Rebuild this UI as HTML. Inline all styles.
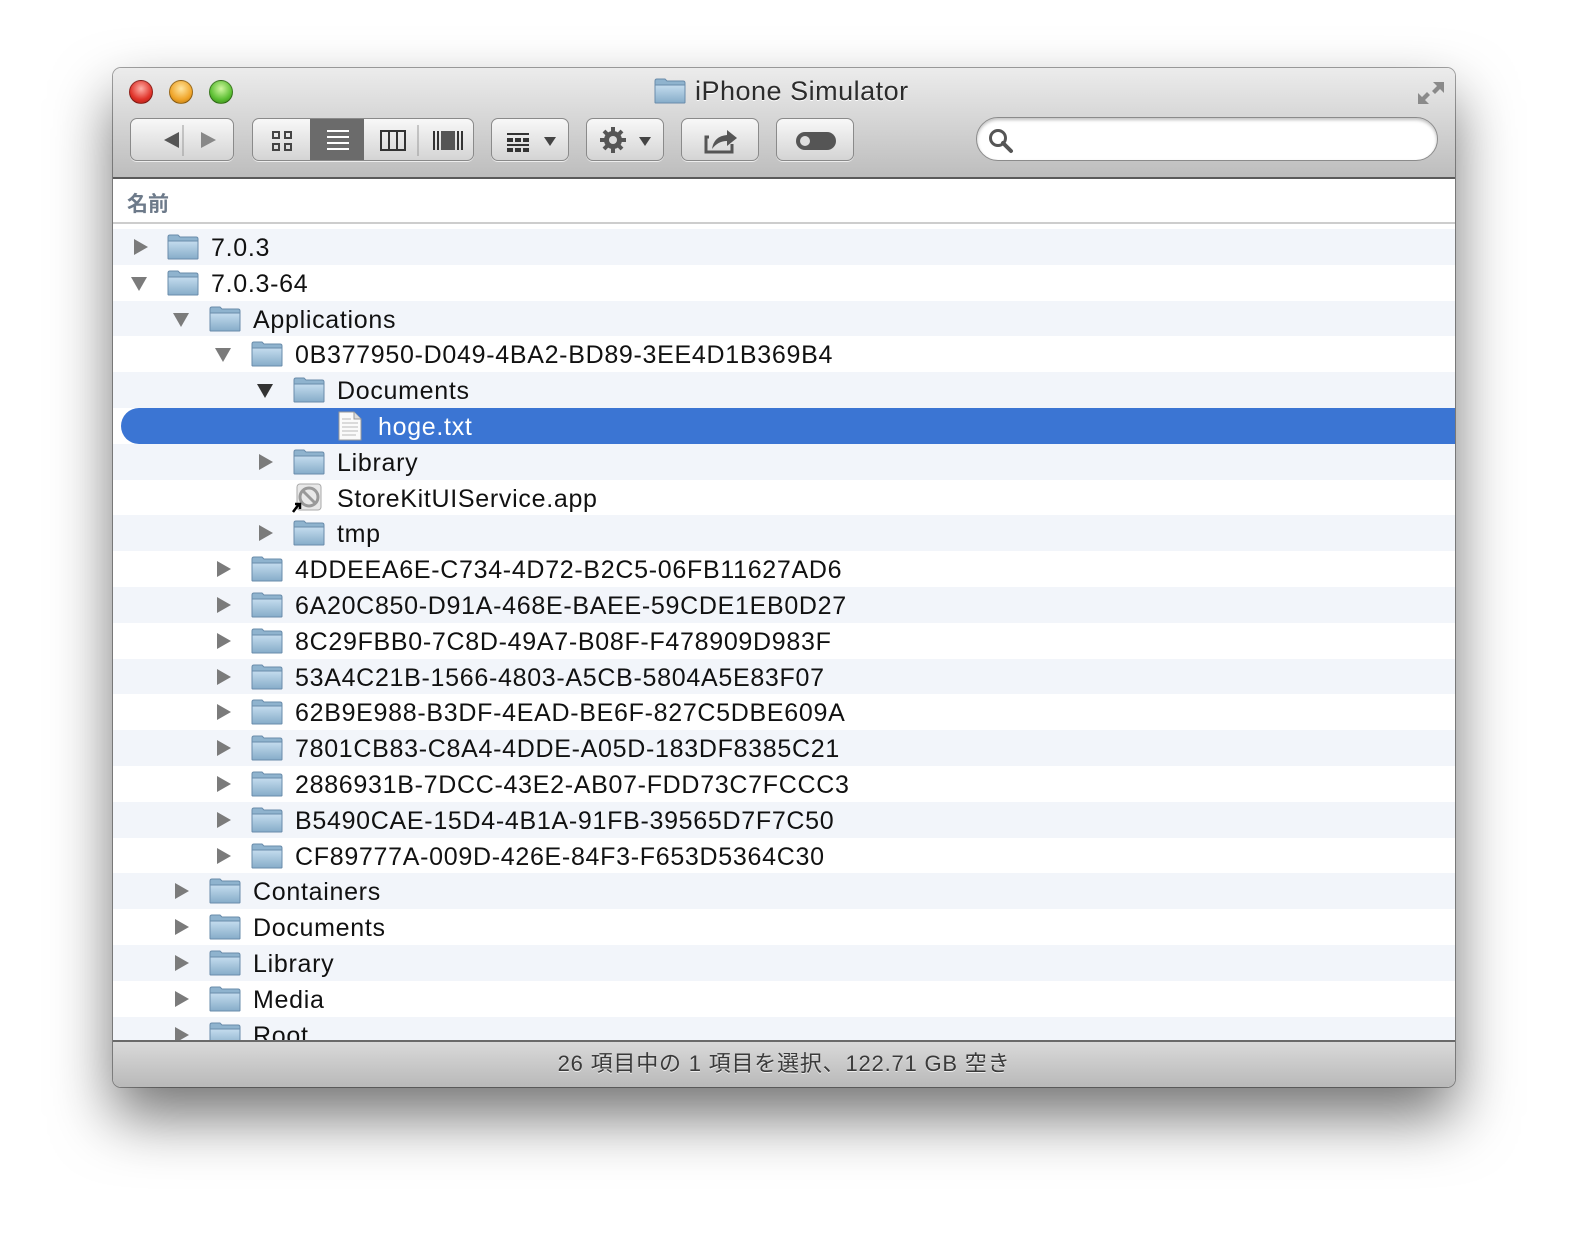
<!DOCTYPE html>
<html><head><meta charset="utf-8"><style>
*{margin:0;padding:0;box-sizing:border-box}
body{width:1576px;height:1250px;background:#fff;position:relative;overflow:hidden;font-family:"Liberation Sans","Noto Sans CJK JP",sans-serif}
.win{position:absolute;left:113px;top:68px;width:1342px;height:1019px;border-radius:8px;box-shadow:0 30px 60px rgba(0,0,0,.55),0 0 0 1px rgba(0,0,0,.35);overflow:hidden;background:#fff}
.tb{position:absolute;left:0;top:0;width:100%;height:111px;background:linear-gradient(#ececec,#d0d0d0 60%,#bdbdbd);border-bottom:2px solid #5a5a5a}
.light{position:absolute;top:12px;width:24px;height:24px;border-radius:50%;border:1px solid rgba(0,0,0,.35)}
.title{position:absolute;top:8px;font-size:27px;letter-spacing:0.5px;color:#2c2c2c;text-shadow:0 1px 0 #fff}
.btn{position:absolute;top:50px;height:43px;border:1px solid #8a8a8a;border-radius:7px;background:linear-gradient(#f8f8f8,#d4d4d4);box-shadow:0 1px 0 rgba(255,255,255,.7)}
.search{position:absolute;left:863px;top:49px;width:462px;height:44px;border-radius:22px;border:1px solid #8b8b8b;background:#fff;box-shadow:inset 0 2px 3px rgba(0,0,0,.25)}
.hdr{position:absolute;left:0;top:111px;width:100%;height:45px;background:#fff;border-bottom:2px solid #cdcdcd;font-size:21px;font-weight:bold;color:#6d7a8a;padding:9px 0 0 14px}
.list{position:absolute;left:0;top:161px;width:100%;height:811px;overflow:hidden}
.row{position:relative;height:35.8px;font-size:25px;letter-spacing:0.7px;color:#111;line-height:35.8px;white-space:nowrap}
.row:nth-child(odd){background:#f2f5fa}
.row.sel{background:#3b75d3;color:#fff;margin-left:8px;border-radius:18px 0 0 18px}
.row svg{position:absolute}
.row span{position:absolute;top:2px}
.status{position:absolute;left:0;bottom:0;width:100%;height:47px;background:linear-gradient(#d9d9d9,#b9b9b9);border-top:2px solid #6a6a6a;text-align:center;font-size:22px;letter-spacing:0.8px;color:#3a3a3a;line-height:44px;text-shadow:0 1px 0 #eee}
</style></head><body>
<svg width="0" height="0" style="position:absolute"><defs>
<linearGradient id="fg" x1="0" y1="0" x2="0" y2="1"><stop offset="0" stop-color="#c4dcee"/><stop offset="1" stop-color="#86acc9"/></linearGradient>
<symbol id="folder" viewBox="0 0 32 26"><path d="M1 3 Q1 1 3 1 H11 L13 3 H29 Q31 3 31 5 V24 Q31 25 30 25 H2 Q1 25 1 24 Z" fill="#8fb3ce" stroke="#6a8cab" stroke-width="1"/><path d="M1 7 H31 V24 Q31 25 30 25 H2 Q1 25 1 24 Z" fill="url(#fg)" stroke="#6a8cab" stroke-width="1"/></symbol>
<symbol id="tr" viewBox="0 0 16 16"><path d="M2 0 L16 8 L2 16Z" fill="#7b7b7b"/></symbol>
<symbol id="td" viewBox="0 0 16 16"><path d="M0 2 L16 2 L8 16Z" fill="#7b7b7b"/></symbol>
</defs></svg>
<div class="win">
 <div class="tb">
  <div class="light" style="left:16px;background:radial-gradient(circle at 50% 35%,#ffb0a8,#e0332a 60%,#a01810)"></div>
  <div class="light" style="left:56px;background:radial-gradient(circle at 50% 35%,#ffe6a0,#f0a52a 60%,#b0700a)"></div>
  <div class="light" style="left:96px;background:radial-gradient(circle at 50% 35%,#d0f7a0,#5cbf33 60%,#2f7a10)"></div>
  <svg style="position:absolute;left:541px;top:10px" width="32" height="26"><use href="#folder"/></svg>
  <div class="title" style="left:582px">iPhone Simulator</div>
  <svg style="position:absolute;left:1303px;top:10px" width="30" height="30" viewBox="0 0 30 30"><path d="M17 4 H28 V15 L24 11 L19 16 L16 13 L21 8Z M2 15 V26 H13 L9 22 L14 17 L11 14 L6 19Z" fill="#8a8a8a"/></svg>
  <div class="btn" style="left:17px;width:104px"><svg width="104" height="43"><path d="M33 21 L48 13 V29Z" fill="#555"/><line x1="52" y1="6" x2="52" y2="37" stroke="#999"/><path d="M70 13 L85 21 L70 29Z" fill="#888"/></svg></div>
  <div class="btn" style="left:139px;width:222px;overflow:hidden"><svg width="222" height="43">
   <g fill="none" stroke="#444" stroke-width="2"><rect x="20" y="13" width="6" height="6"/><rect x="32" y="13" width="6" height="6"/><rect x="20" y="25" width="6" height="6"/><rect x="32" y="25" width="6" height="6"/></g>
   <rect x="57" y="0" width="54" height="43" fill="#6b6b6b"/>
   <g stroke="#fff" stroke-width="2"><line x1="74" y1="12" x2="96" y2="12"/><line x1="74" y1="18" x2="96" y2="18"/><line x1="74" y1="24" x2="96" y2="24"/><line x1="74" y1="30" x2="96" y2="30"/></g>
   <g fill="none" stroke="#333" stroke-width="2"><rect x="128" y="12" width="24" height="19"/><line x1="136" y1="12" x2="136" y2="31"/><line x1="144" y1="12" x2="144" y2="31"/></g>
   <line x1="165" y1="6" x2="165" y2="37" stroke="#999"/>
   <g fill="#333"><rect x="180" y="12" width="2" height="19"/><rect x="184" y="12" width="2" height="19"/><rect x="188" y="12" width="14" height="19" fill="#555"/><rect x="204" y="12" width="2" height="19"/><rect x="208" y="12" width="2" height="19"/></g>
  </svg></div>
  <div class="btn" style="left:378px;width:78px"><svg width="78" height="43"><g fill="#333"><rect x="15" y="14" width="22" height="2"/><rect x="15" y="19" width="6" height="4"/><rect x="23" y="19" width="6" height="4"/><rect x="31" y="19" width="6" height="4"/><rect x="15" y="25" width="22" height="2"/><rect x="15" y="29" width="6" height="4"/><rect x="23" y="29" width="6" height="4"/><rect x="31" y="29" width="6" height="4"/></g><path d="M52 18 L64 18 L58 27Z" fill="#444"/></svg></div>
  <div class="btn" style="left:473px;width:78px"><svg width="78" height="43"><g transform="translate(26,21)"><circle r="9" fill="#555"/><g stroke="#555" stroke-width="4"><line x1="0" y1="-13" x2="0" y2="13"/><line x1="-13" y1="0" x2="13" y2="0"/><line x1="-9" y1="-9" x2="9" y2="9"/><line x1="-9" y1="9" x2="9" y2="-9"/></g><circle r="4" fill="#ddd"/></g><path d="M52 18 L64 18 L58 27Z" fill="#444"/></svg></div>
  <div class="btn" style="left:568px;width:78px"><svg width="78" height="43"><path d="M27 18 H24 V33 H50 V25" fill="none" stroke="#555" stroke-width="3"/><path d="M30 30 Q32 17 45 16 V11 L55 19 L45 27 V22 Q36 22 30 30Z" fill="#555"/></svg></div>
  <div class="btn" style="left:663px;width:78px"><svg width="78" height="43"><rect x="19" y="13" width="40" height="18" rx="9" fill="#555"/><circle cx="28" cy="22" r="5" fill="#ddd"/></svg></div>
  <div class="search"><svg style="position:absolute;left:10px;top:9px" width="28" height="28"><circle cx="11" cy="11" r="7.5" fill="none" stroke="#555" stroke-width="3"/><line x1="16" y1="16" x2="24" y2="24" stroke="#555" stroke-width="4" stroke-linecap="round"/></svg></div>
 </div>
 <div class="hdr">名前</div>
 <div class="list">
  <div class="row"><svg style="left:19px;top:10px" width="16" height="16"><use href="#tr"/></svg><svg style="left:54px;top:5px" width="32" height="26"><use href="#folder"/></svg><span style="left:98px">7.0.3</span></div>
  <div class="row"><svg style="left:18px;top:10px" width="16" height="16"><use href="#td"/></svg><svg style="left:54px;top:5px" width="32" height="26"><use href="#folder"/></svg><span style="left:98px">7.0.3-64</span></div>
  <div class="row"><svg style="left:60px;top:10px" width="16" height="16"><use href="#td"/></svg><svg style="left:96px;top:5px" width="32" height="26"><use href="#folder"/></svg><span style="left:140px">Applications</span></div>
  <div class="row"><svg style="left:102px;top:10px" width="16" height="16"><use href="#td"/></svg><svg style="left:138px;top:5px" width="32" height="26"><use href="#folder"/></svg><span style="left:182px">0B377950-D049-4BA2-BD89-3EE4D1B369B4</span></div>
  <div class="row"><svg style="left:144px;top:10px" width="16" height="16"><path d="M0 2 L16 2 L8 16Z" fill="#333"/></svg><svg style="left:180px;top:5px" width="32" height="26"><use href="#folder"/></svg><span style="left:224px">Documents</span></div>
  <div class="row sel"><svg style="left:217px;top:3px" width="24" height="30"><path d="M1 1 H16 L23 8 V29 H1Z" fill="#fafafa" stroke="#999"/><path d="M16 1 V8 H23" fill="#ddd" stroke="#999"/><g stroke="#bbb"><line x1="4" y1="8" x2="13" y2="8"/><line x1="4" y1="12" x2="20" y2="12"/><line x1="4" y1="16" x2="20" y2="16"/><line x1="4" y1="20" x2="20" y2="20"/><line x1="4" y1="24" x2="18" y2="24"/></g></svg><span style="left:257px">hoge.txt</span></div>
  <div class="row"><svg style="left:144px;top:10px" width="16" height="16"><use href="#tr"/></svg><svg style="left:180px;top:5px" width="32" height="26"><use href="#folder"/></svg><span style="left:224px">Library</span></div>
  <div class="row"><svg style="left:178px;top:2px" width="34" height="32"><rect x="6" y="2" width="24" height="26" rx="3" fill="#e8e8e8" stroke="#aaa"/><circle cx="18" cy="15" r="9" fill="none" stroke="#999" stroke-width="3"/><line x1="12" y1="9" x2="24" y2="21" stroke="#999" stroke-width="3"/><path d="M2 30 L8 22 M4 22 H9 V27" stroke="#000" stroke-width="2.5" fill="none"/></svg><span style="left:224px">StoreKitUIService.app</span></div>
  <div class="row"><svg style="left:144px;top:10px" width="16" height="16"><use href="#tr"/></svg><svg style="left:180px;top:5px" width="32" height="26"><use href="#folder"/></svg><span style="left:224px">tmp</span></div>
  <div class="row"><svg style="left:102px;top:10px" width="16" height="16"><use href="#tr"/></svg><svg style="left:138px;top:5px" width="32" height="26"><use href="#folder"/></svg><span style="left:182px">4DDEEA6E-C734-4D72-B2C5-06FB11627AD6</span></div>
  <div class="row"><svg style="left:102px;top:10px" width="16" height="16"><use href="#tr"/></svg><svg style="left:138px;top:5px" width="32" height="26"><use href="#folder"/></svg><span style="left:182px">6A20C850-D91A-468E-BAEE-59CDE1EB0D27</span></div>
  <div class="row"><svg style="left:102px;top:10px" width="16" height="16"><use href="#tr"/></svg><svg style="left:138px;top:5px" width="32" height="26"><use href="#folder"/></svg><span style="left:182px">8C29FBB0-7C8D-49A7-B08F-F478909D983F</span></div>
  <div class="row"><svg style="left:102px;top:10px" width="16" height="16"><use href="#tr"/></svg><svg style="left:138px;top:5px" width="32" height="26"><use href="#folder"/></svg><span style="left:182px">53A4C21B-1566-4803-A5CB-5804A5E83F07</span></div>
  <div class="row"><svg style="left:102px;top:10px" width="16" height="16"><use href="#tr"/></svg><svg style="left:138px;top:5px" width="32" height="26"><use href="#folder"/></svg><span style="left:182px">62B9E988-B3DF-4EAD-BE6F-827C5DBE609A</span></div>
  <div class="row"><svg style="left:102px;top:10px" width="16" height="16"><use href="#tr"/></svg><svg style="left:138px;top:5px" width="32" height="26"><use href="#folder"/></svg><span style="left:182px">7801CB83-C8A4-4DDE-A05D-183DF8385C21</span></div>
  <div class="row"><svg style="left:102px;top:10px" width="16" height="16"><use href="#tr"/></svg><svg style="left:138px;top:5px" width="32" height="26"><use href="#folder"/></svg><span style="left:182px">2886931B-7DCC-43E2-AB07-FDD73C7FCCC3</span></div>
  <div class="row"><svg style="left:102px;top:10px" width="16" height="16"><use href="#tr"/></svg><svg style="left:138px;top:5px" width="32" height="26"><use href="#folder"/></svg><span style="left:182px">B5490CAE-15D4-4B1A-91FB-39565D7F7C50</span></div>
  <div class="row"><svg style="left:102px;top:10px" width="16" height="16"><use href="#tr"/></svg><svg style="left:138px;top:5px" width="32" height="26"><use href="#folder"/></svg><span style="left:182px">CF89777A-009D-426E-84F3-F653D5364C30</span></div>
  <div class="row"><svg style="left:60px;top:10px" width="16" height="16"><use href="#tr"/></svg><svg style="left:96px;top:5px" width="32" height="26"><use href="#folder"/></svg><span style="left:140px">Containers</span></div>
  <div class="row"><svg style="left:60px;top:10px" width="16" height="16"><use href="#tr"/></svg><svg style="left:96px;top:5px" width="32" height="26"><use href="#folder"/></svg><span style="left:140px">Documents</span></div>
  <div class="row"><svg style="left:60px;top:10px" width="16" height="16"><use href="#tr"/></svg><svg style="left:96px;top:5px" width="32" height="26"><use href="#folder"/></svg><span style="left:140px">Library</span></div>
  <div class="row"><svg style="left:60px;top:10px" width="16" height="16"><use href="#tr"/></svg><svg style="left:96px;top:5px" width="32" height="26"><use href="#folder"/></svg><span style="left:140px">Media</span></div>
  <div class="row"><svg style="left:60px;top:10px" width="16" height="16"><use href="#tr"/></svg><svg style="left:96px;top:5px" width="32" height="26"><use href="#folder"/></svg><span style="left:140px">Root</span></div>
 </div>
 <div class="status">26 項目中の 1 項目を選択、122.71 GB 空き</div>
</div>
</body></html>
